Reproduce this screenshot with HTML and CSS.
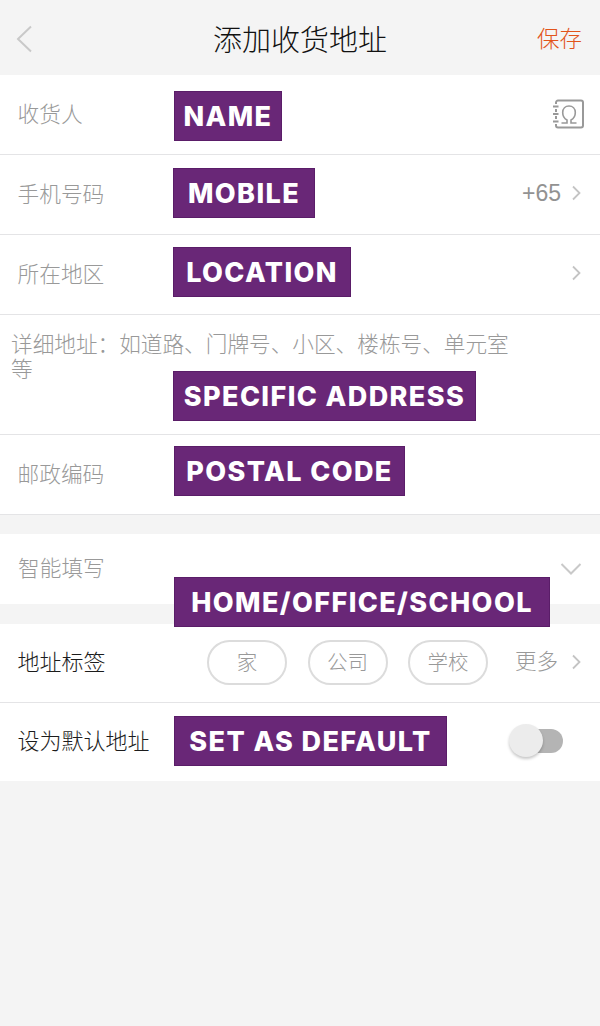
FILE: index.html
```html
<!DOCTYPE html>
<html lang="zh-CN">
<head>
<meta charset="utf-8">
<title>添加收货地址</title>
<link rel="stylesheet" href="styles.css">
</head>
<body>
<div class="page">
  <header class="nav">
    <svg class="back" width="16" height="28" viewBox="0 0 16 28"><path d="M15 1.500 2 14l13 12.500"/></svg>
    <h1 class="title">添加收货地址</h1>
    <span class="save">保存</span>
  </header>

  <section class="group">
    <div class="row">
      <span class="label">收货人</span>
      <span class="tag tag-name">NAME</span>
      <svg class="contact" width="32" height="30" viewBox="0 0 32 30"><path class="c-box" d="M4 5V3.500A2 2 0 0 1 6 1.500h23a2 2 0 0 1 2 2v23a2 2 0 0 1-2 2H6a2 2 0 0 1-2-2V25M4 10v3M4 17v3M1 7.500h5.500M1 15h5.500M1 22.500h5.500"/><path class="c-box thin" d="M9.500 24h5.500v-3c-3-1.500-4.300-4-4.300-7.500 0-4 2.700-6.500 6.300-6.500s6.300 2.500 6.300 6.500c0 3.500-1.300 6-4.300 7.500v3h5.500"/></svg>
    </div>
    <div class="row">
      <span class="label">手机号码</span>
      <span class="tag tag-mobile">MOBILE</span>
      <span class="code">+65</span>
      <svg class="chev" width="10" height="16" viewBox="0 0 10 16"><path d="m2 1.500 6.500 6.500L2 14.500"/></svg>
    </div>
    <div class="row">
      <span class="label">所在地区</span>
      <span class="tag tag-location">LOCATION</span>
      <svg class="chev" width="10" height="16" viewBox="0 0 10 16"><path d="m2 1.500 6.500 6.500L2 14.500"/></svg>
    </div>
    <div class="row row-address">
      <p class="address"><span class="address-line">详细地址：如道路、门牌号、小区、楼栋号、单元室</span><span class="address-line">等</span></p>
      <span class="tag tag-address">SPECIFIC ADDRESS</span>
    </div>
    <div class="row">
      <span class="label">邮政编码</span>
      <span class="tag tag-postal">POSTAL CODE</span>
    </div>
  </section>

  <section class="group smart">
    <span class="label">智能填写</span>
    <svg class="chev-down" width="22" height="14" viewBox="0 0 22 14"><path d="m1.500 2 9.500 9.500L20.500 2"/></svg>
    <span class="tag tag-home">HOME/OFFICE/SCHOOL</span>
  </section>

  <section class="group last">
    <div class="row row-tags">
      <span class="label dark">地址标签</span>
      <div class="pills">
        <span class="pill">家</span>
        <span class="pill">公司</span>
        <span class="pill">学校</span>
      </div>
      <span class="more">更多</span>
      <svg class="chev" width="10" height="16" viewBox="0 0 10 16"><path d="m2 1.500 6.500 6.500L2 14.500"/></svg>
    </div>
    <div class="row row-default">
      <span class="label dark">设为默认地址</span>
      <span class="tag tag-default">SET AS DEFAULT</span>
      <div class="toggle"><span class="knob"></span></div>
    </div>
  </section>
</div>
</body>
</html>
```

FILE: styles.css
```css
* { box-sizing: border-box; }
html, body { margin: 0; padding: 0; }
body {
  background: #f4f4f4;
  font-family: "Noto Sans CJK SC", "Liberation Sans", sans-serif;
  font-weight: 300;
}
.page { height: 1026px; overflow: hidden; background: #f4f4f4; }

.nav {
  height: 75px;
  display: flex;
  align-items: center;
  justify-content: space-between;
  padding: 2px 18px 0 16px;
  position: relative;
}
.back path { fill: none; stroke: #c9c9c9; stroke-width: 2; }
.title {
  position: absolute;
  left: 0;
  right: 0;
  top: 16px;
  margin: 0;
  text-align: center;
  font-size: 29px;
  line-height: 44px;
  font-weight: 300;
  color: #111;
}
.save { font-size: 22.500px; line-height: 30px; padding-bottom: 4px; color: #e2541b; }

.group { background: #fff; position: relative; }
.row {
  height: 80px;
  display: flex;
  align-items: center;
  padding: 0 18px 0 17.500px;
  border-bottom: 1px solid #e4e4e6;
  position: relative;
}
.label { font-size: 21.700px; line-height: 30px; padding-bottom: 4px; color: #999; }
.label.dark { font-size: 22px; padding-bottom: 7px; color: #1c1c1c; }

.tag {
  position: absolute;
  height: 50px;
  background: #692777;
  border: 1px solid #5a1d68;
  color: #fff;
  font-family: "Inter", "Liberation Sans", sans-serif;
  font-weight: 800;
  font-size: 27px;
  letter-spacing: 1.400px;
  line-height: 49px;
  text-align: center;
  white-space: nowrap;
}
.tag-name { left: 174px; top: 16px; width: 108px; }
.tag-mobile { left: 173px; top: 13px; width: 142px; }
.tag-location { left: 173px; top: 12px; width: 178px; }
.tag-address { left: 173px; top: 56px; width: 303px; }
.tag-postal { left: 174px; top: 11px; width: 231px; }
.tag-home { left: 174px; top: 43px; width: 376px; z-index: 1; }
.tag-default { left: 174px; top: 13px; width: 273px; }

.contact { margin-left: auto; margin-right: -2px; margin-bottom: 1px; }
.c-box { fill: none; stroke: #999; stroke-width: 2; }
.c-box.thin { stroke-width: 1.600; }
.code {
  margin-left: auto;
  padding-bottom: 3px;
  font-family: "Liberation Sans", sans-serif;
  font-weight: 400;
  font-size: 23px;
  line-height: 30px;
  color: #929292;
}
.chev { flex: none; margin: 0 1px 3px 10px; }
.row > .chev:nth-child(3) { margin-left: auto; }
.chev path { fill: none; stroke: #c4c4c4; stroke-width: 1.800; }

.row-address { height: 120px; align-items: flex-start; padding: 15px 11px 0; }
.address { margin: 0; font-size: 21.650px; line-height: 25px; color: #999; }
.address-line { display: block; width: fit-content; }

.smart {
  margin-top: 19px;
  height: 70px;
  display: flex;
  align-items: center;
  justify-content: space-between;
  padding: 0 18px 0 18px;
}
.chev-down path { fill: none; stroke: #c9c9c9; stroke-width: 2; }

.last { margin-top: 20px; }
.row-tags { height: 79px; }
.pills { display: flex; gap: 20.500px; margin-left: 101.500px; padding-bottom: 2px; }
.pill {
  width: 80px;
  height: 45px;
  border: 2px solid #dcdcdc;
  border-radius: 23px;
  font-size: 20.500px;
  line-height: 38px;
  text-align: center;
  color: #999;
}
.more { margin-left: auto; font-size: 21.500px; line-height: 30px; padding-bottom: 6px; color: #999; }
.row-tags .chev { margin-left: 13px; margin-right: 1px; }
.row-default { height: 78px; border-bottom: 0; }
.toggle {
  position: absolute;
  left: 515px;
  top: 26px;
  width: 48px;
  height: 24px;
  border-radius: 12px;
  background: #b4b4b4;
}
.knob {
  position: absolute;
  left: -6px;
  top: -5px;
  width: 34px;
  height: 33px;
  border-radius: 50%;
  background: #ececec;
  box-shadow: 0 2px 3px rgba(0, 0, 0, .22);
}
```
